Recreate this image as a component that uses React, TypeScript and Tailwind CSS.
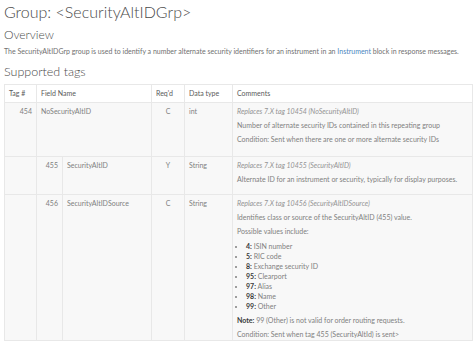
const rows = [
  {
    tag: "454",
    nested: false,
    name: "NoSecurityAltID",
    req: "C",
    type: "int",
    h: "h-[54px]",
  },
  {
    tag: "455",
    nested: true,
    name: "SecurityAltID",
    req: "Y",
    type: "String",
    h: "h-[38px]",
  },
  {
    tag: "456",
    nested: true,
    name: "SecurityAltIDSource",
    req: "C",
    type: "String",
    h: "",
  },
];

const values = [
  ["4", "ISIN number"],
  ["5", "RIC code"],
  ["8", "Exchange security ID"],
  ["95", "Clearport"],
  ["97", "Alias"],
  ["98", "Name"],
  ["99", "Other"],
];

function Comments({ index }: { index: number }) {
  if (index === 0) {
    return (
      <>
        <p className="mb-[5px] italic text-[#939393]">Replaces 7.X tag 10454 (NoSecurityAltID)</p>
        <p className="mb-[5px]">Number of alternate security IDs contained in this repeating group</p>
        <p className="mb-[5px]">Condition: Sent when there are one or more alternate security IDs</p>
      </>
    );
  }
  if (index === 1) {
    return (
      <>
        <p className="mb-[5px] italic text-[#939393]">Replaces 7.X tag 10455 (SecurityAltID)</p>
        <p className="mb-[5px]">Alternate ID for an instrument or security, typically for display purposes.</p>
      </>
    );
  }
  return (
    <>
      <p className="mb-[5px] italic text-[#939393]">Replaces 7.X tag 10456 (SecurityAltIDSource)</p>
      <p className="mb-[5px]">Identifies class or source of the SecurityAltID (455) value.</p>
      <p className="mb-[5px]">Possible values include:</p>
      <ul className="mb-[5px] list-disc pl-[9px]">
        {values.map(([k, v]) => (
          <li key={k} className="leading-[10px]">
            <span className="font-bold text-[#3a3a3a]">{k}:</span> {v}
          </li>
        ))}
      </ul>
      <p className="mb-[5px]">
        <span className="font-bold text-[#3a3a3a]">Note:</span> 99 (Other) is not valid for order routing requests.
      </p>
      <p className="mb-[1px]">Condition: Sent when tag 455 (SecurityAltId) is sent&gt;</p>
    </>
  );
}

export default function App() {
  const cell = "border border-[#e8e8e8] align-top pt-[4px] px-[4px]";
  const head = "border border-[#e8e8e8] px-[4px] font-normal";
  return (
    <div
      className="h-[348px] w-[474px] overflow-hidden bg-white pl-[4px] text-[#808080]"
      style={{ fontFamily: "Lato, 'Noto Sans', sans-serif" }}
    >
      <h1 className="mt-[4px] text-[16px] font-light leading-[16px] text-[#4a4a4a]">
        Group: &lt;SecurityAltIDGrp&gt;
      </h1>
      <h2 className="mt-[8px] text-[12px] font-light leading-[14px] text-[#4a4a4a]">Overview</h2>
      <p className="mt-[4.5px] text-[7px] leading-[9px] text-[#707070]">
        The SecurityAltIDGrp group is used to identify a number alternate security identifiers for an
        instrument in an <span className="text-[#4a86c0]">Instrument</span> block in response messages.
      </p>
      <h2 className="mt-[9.5px] text-[12.5px] font-light leading-[14px] text-[#4a4a4a]">Supported tags</h2>
      <table className="mt-[5px] w-[468px] table-fixed border-collapse text-[7px] leading-[9px]">
        <colgroup>
          <col className="w-[32px]" />
          <col className="w-[26px]" />
          <col className="w-[89px]" />
          <col className="w-[33px]" />
          <col className="w-[48px]" />
          <col className="w-[240px]" />
        </colgroup>
        <thead>
          <tr className="h-[18px] bg-white text-left text-[#5a5a5a]">
            <th className={head}>Tag #</th>
            <th colSpan={2} className={head}>Field Name</th>
            <th className={head}>Req'd</th>
            <th className={head}>Data type</th>
            <th className={head}>Comments</th>
          </tr>
        </thead>
        <tbody>
          {rows.map((r, i) => (
            <tr key={r.tag} className={`bg-[#f8f8f8] ${r.h}`}>
              {r.nested ? (
                <>
                  <td className={cell}></td>
                  <td className={`${cell} text-right`}>{r.tag}</td>
                  <td className={cell}>{r.name}</td>
                </>
              ) : (
                <>
                  <td className={`${cell} text-right`}>{r.tag}</td>
                  <td colSpan={2} className={cell}>{r.name}</td>
                </>
              )}
              <td className={`${cell} text-center`}>{r.req}</td>
              <td className={cell}>{r.type}</td>
              <td className={cell}>
                <Comments index={i} />
              </td>
            </tr>
          ))}
        </tbody>
      </table>
    </div>
  );
}
